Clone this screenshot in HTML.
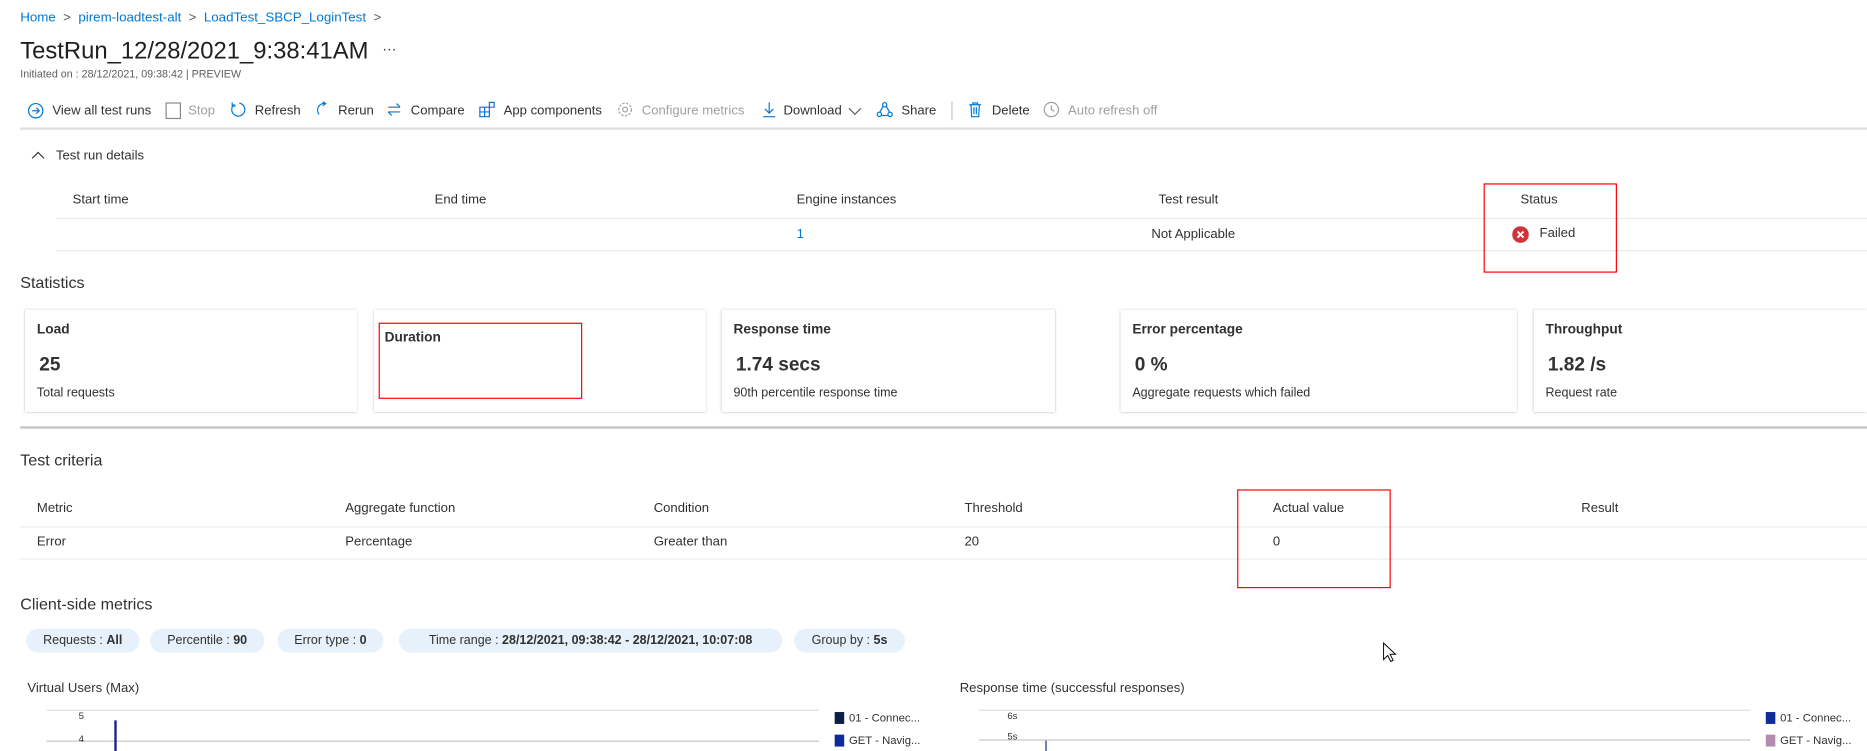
<!DOCTYPE html>
<html><head><meta charset="utf-8"><style>
html,body{margin:0;padding:0;background:#fff;overflow:hidden;width:1867px;height:751px}
#w{position:absolute;left:0;top:0;width:1568px;height:631px;transform:scale(1.19069);transform-origin:0 0;font-family:"Liberation Sans",sans-serif;color:#323130;font-size:11px}
.a{position:absolute;white-space:nowrap}
.bl{color:#0078d4}
.g{color:#a19f9d}
.ln{position:absolute;height:1px;background:#edebe9}
.card{position:absolute;top:260px;height:86px;background:#fff;box-shadow:0 0.5px 2px rgba(0,0,0,.25),0 0 1px rgba(0,0,0,.12)}
.card b{position:absolute;left:10px;top:11px;font-size:11.5px}
.card .v{position:absolute;left:12px;top:38px;font-size:16px;font-weight:bold}
.card .s{position:absolute;left:10px;top:64px;font-size:10.5px}
.rb{position:absolute;border:1.3px solid #f00}
.pill{position:absolute;top:528px;height:20px;line-height:20px;background:#e6f1fb;border-radius:10px;font-size:10.5px;text-align:center}
svg{position:absolute}
.tb{top:87px}
</style></head><body><div id="w">
<div class="a bl" style="left:17px;top:9px;font-size:11.2px">Home <span style="color:#605e5c">&nbsp;&gt;&nbsp;</span> pirem-loadtest-alt <span style="color:#605e5c">&nbsp;&gt;&nbsp;</span> LoadTest_SBCP_LoginTest <span style="color:#605e5c">&nbsp;&gt;</span></div>
<div class="a" style="left:17px;top:32px;font-size:20px;color:#201f1e">TestRun_12/28/2021_9:38:41AM</div>
<div class="a" style="left:321px;top:34px;font-size:12px">···</div>
<div class="a" style="left:17px;top:57px;font-size:9px;color:#605e5c">Initiated on : 28/12/2021, 09:38:42 | PREVIEW</div>

<svg style="left:23px;top:86px" width="14" height="14" viewBox="0 0 14 14"><circle cx="7" cy="7" r="6" fill="none" stroke="#0078d4"/><path d="M4 7h6M7.5 4.5L10 7 7.5 9.5" fill="none" stroke="#0078d4"/></svg>
<div class="a tb" style="left:44px">View all test runs</div>
<div style="position:absolute;left:139px;top:86px;width:11px;height:12px;border:1px solid #8a8886"></div>
<div class="a g tb" style="left:158px">Stop</div>
<svg style="left:193px;top:85px" width="14" height="14" viewBox="0 0 14 14"><path d="M4 2.5A5.5 5.5 0 1 0 8 1.6" fill="none" stroke="#0078d4"/><path d="M2 1v3h3" fill="none" stroke="#0078d4"/></svg>
<div class="a tb" style="left:214px">Refresh</div>
<svg style="left:264px;top:85px" width="14" height="14" viewBox="0 0 14 14"><path d="M9 2A5.5 5.5 0 0 0 4 11" fill="none" stroke="#0078d4"/><path d="M7 0.5L9.5 2 7 4" fill="none" stroke="#0078d4"/></svg>
<div class="a tb" style="left:284px">Rerun</div>
<svg style="left:324px;top:85px" width="14" height="14" viewBox="0 0 14 14"><path d="M2 5h10M9 2l3 3M12 9H2M5 12l-3-3" fill="none" stroke="#0078d4"/></svg>
<div class="a tb" style="left:345px">Compare</div>
<svg style="left:402px;top:85px" width="14" height="14" viewBox="0 0 14 14"><path d="M1 5h4v4H1zM5 5h4v4H5zM1 9h4v4H1zM5 9h4v4H5zM9 1h4v4H9z" fill="none" stroke="#0078d4"/></svg>
<div class="a tb" style="left:423px">App components</div>
<svg style="left:518px;top:85px" width="14" height="14" viewBox="0 0 14 14"><circle cx="7" cy="7" r="2" fill="none" stroke="#a19f9d"/><circle cx="7" cy="7" r="5.3" fill="none" stroke="#a19f9d" stroke-dasharray="2 1.2"/></svg>
<div class="a g tb" style="left:539px">Configure metrics</div>
<svg style="left:639px;top:85px" width="14" height="14" viewBox="0 0 14 14"><path d="M7 1v9M3.5 6.5L7 10l3.5-3.5M2 13h10" fill="none" stroke="#0078d4"/></svg>
<div class="a tb" style="left:658px">Download</div>
<svg style="left:712px;top:88px" width="12" height="10" viewBox="0 0 12 10"><path d="M1 3l5 5 5-5" fill="none" stroke="#605e5c"/></svg>
<svg style="left:736px;top:85px" width="14" height="14" viewBox="0 0 14 14"><circle cx="7" cy="3" r="1.8" fill="none" stroke="#0078d4"/><circle cx="2.5" cy="11" r="1.8" fill="none" stroke="#0078d4"/><circle cx="11.5" cy="11" r="1.8" fill="none" stroke="#0078d4"/><path d="M5.5 4.5L3 9M8.5 4.5L11 9M4.5 12h5" fill="none" stroke="#0078d4"/></svg>
<div class="a tb" style="left:757px">Share</div>
<div style="position:absolute;left:799px;top:85px;width:1px;height:16px;background:#c8c6c4"></div>
<svg style="left:812px;top:85px" width="14" height="14" viewBox="0 0 14 14"><path d="M2 3h10M5 3V1.5h4V3M3.5 3l.5 10h6l.5-10M6 5v6M8 5v6" fill="none" stroke="#0078d4"/></svg>
<div class="a tb" style="left:833px">Delete</div>
<svg style="left:876px;top:85px" width="14" height="14" viewBox="0 0 14 14"><circle cx="7" cy="7" r="6" fill="none" stroke="#a19f9d"/><path d="M7 3.5V7l2.5 1.5" fill="none" stroke="#a19f9d"/></svg>
<div class="a g tb" style="left:897px">Auto refresh off</div>
<div class="ln" style="left:17px;right:0;top:107px;height:2px;background:#e1dfdd"></div>

<svg style="left:26px;top:126px" width="12" height="10" viewBox="0 0 12 10"><path d="M1 7l5-5 5 5" fill="none" stroke="#323130"/></svg>
<div class="a" style="left:47px;top:125px">Test run details</div>
<div class="a" style="left:61px;top:162px">Start time</div>
<div class="a" style="left:365px;top:162px">End time</div>
<div class="a" style="left:669px;top:162px">Engine instances</div>
<div class="a" style="left:973px;top:162px">Test result</div>
<div class="a" style="left:1277px;top:162px">Status</div>
<div class="ln" style="left:47px;right:0;top:183px"></div>
<div class="a bl" style="left:669px;top:191px">1</div>
<div class="a" style="left:967px;top:191px">Not Applicable</div>
<svg style="left:1270px;top:190px" width="14" height="14" viewBox="0 0 14 14"><circle cx="7" cy="7" r="7" fill="#d13438"/><path d="M4.5 4.5l5 5M9.5 4.5l-5 5" stroke="#fff" stroke-width="1.6"/></svg>
<div class="a" style="left:1293px;top:190px">Failed</div>
<div class="ln" style="left:47px;right:0;top:210px"></div>
<div class="rb" style="left:1246px;top:154px;width:110px;height:73px"></div>

<div class="a" style="left:17px;top:230px;font-size:13.5px">Statistics</div>
<div class="card" style="left:21px;width:279px"><b>Load</b><div class="v">25</div><div class="s">Total requests</div></div>
<div class="card" style="left:314px;width:279px"></div>
<div class="a" style="left:323px;top:278px;font-weight:bold;font-size:11.5px">Duration</div>
<div class="card" style="left:606px;width:280px"><b>Response time</b><div class="v">1.74 secs</div><div class="s">90th percentile response time</div></div>
<div class="card" style="left:941px;width:333px"><b>Error percentage</b><div class="v">0 %</div><div class="s">Aggregate requests which failed</div></div>
<div class="card" style="left:1288px;width:280px"><b>Throughput</b><div class="v">1.82 /s</div><div class="s">Request rate</div></div>
<div class="rb" style="left:318px;top:271px;width:169px;height:62px"></div>
<div class="ln" style="left:17px;right:0;top:358px;height:2px;background:#c8c6c4"></div>

<div class="a" style="left:17px;top:379px;font-size:13.5px">Test criteria</div>
<div class="a" style="left:31px;top:421px">Metric</div>
<div class="a" style="left:290px;top:421px">Aggregate function</div>
<div class="a" style="left:549px;top:421px">Condition</div>
<div class="a" style="left:810px;top:421px">Threshold</div>
<div class="a" style="left:1069px;top:421px">Actual value</div>
<div class="a" style="left:1328px;top:421px">Result</div>
<div class="ln" style="left:17px;right:0;top:442px"></div>
<div class="a" style="left:31px;top:449px">Error</div>
<div class="a" style="left:290px;top:449px">Percentage</div>
<div class="a" style="left:549px;top:449px">Greater than</div>
<div class="a" style="left:810px;top:449px">20</div>
<div class="a" style="left:1069px;top:449px">0</div>
<div class="ln" style="left:17px;right:0;top:469px"></div>
<div class="rb" style="left:1039px;top:411px;width:127px;height:81px"></div>

<div class="a" style="left:17px;top:500px;font-size:13.5px">Client-side metrics</div>
<div class="pill" style="left:22px;width:95px">Requests : <b>All</b></div>
<div class="pill" style="left:126px;width:96px">Percentile : <b>90</b></div>
<div class="pill" style="left:233px;width:89px">Error type : <b>0</b></div>
<div class="pill" style="left:335px;width:322px">Time range : <b>28/12/2021, 09:38:42 - 28/12/2021, 10:07:08</b></div>
<div class="pill" style="left:667px;width:93px">Group by : <b>5s</b></div>
<svg style="left:1161px;top:539px" width="12" height="18" viewBox="0 0 12 18"><path d="M1 1v14l3.5-3.5 2.5 5 2-1-2.5-5H11z" fill="#fff" stroke="#000" stroke-width="0.8"/></svg>

<div class="a" style="left:23px;top:572px;font-size:11px">Virtual Users (Max)</div>
<div class="ln" style="left:39px;width:649px;top:596px;background:#e1dfdd"></div>
<div class="ln" style="left:39px;width:649px;top:622px;background:#c8c6c4"></div>
<div class="a" style="left:66px;top:597px;font-size:8px">5</div>
<div class="a" style="left:66px;top:616px;font-size:8px">4</div>
<div style="position:absolute;left:96px;top:605px;width:2px;height:26px;background:#1a237e"></div>
<div style="position:absolute;left:701px;top:598px;width:8px;height:10px;background:#0b1f44"></div>
<div class="a" style="left:713px;top:598px;font-size:9.5px">01 - Connec...</div>
<div style="position:absolute;left:701px;top:617px;width:8px;height:10px;background:#0f2a99"></div>
<div class="a" style="left:713px;top:617px;font-size:9.5px">GET - Navig...</div>

<div class="a" style="left:806px;top:572px;font-size:11px">Response time (successful responses)</div>
<div class="ln" style="left:822px;width:648px;top:596px;background:#e1dfdd"></div>
<div class="ln" style="left:822px;width:648px;top:621px;background:#c8c6c4"></div>
<div class="a" style="left:846px;top:597px;font-size:8px">6s</div>
<div class="a" style="left:846px;top:614px;font-size:8px">5s</div>
<div style="position:absolute;left:878px;top:622px;width:1px;height:9px;background:#1a237e"></div>
<div style="position:absolute;left:1483px;top:598px;width:8px;height:10px;background:#0f2a99"></div>
<div class="a" style="left:1495px;top:598px;font-size:9.5px">01 - Connec...</div>
<div style="position:absolute;left:1483px;top:617px;width:8px;height:10px;background:#b48cb0"></div>
<div class="a" style="left:1495px;top:617px;font-size:9.5px">GET - Navig...</div>
</div></body></html>
